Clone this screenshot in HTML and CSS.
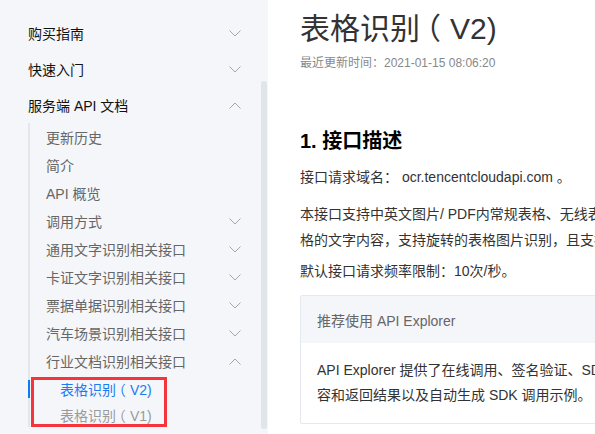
FILE: index.html
```html
<!DOCTYPE html>
<html lang="zh-CN">
<head>
<meta charset="utf-8">
<link rel="stylesheet" href="styles.css">
</head>
<body>
<div class="page">
  <aside class="sidebar">
    <div class="nav-item">
      <span>购买指南</span>
      <svg class="chev" viewBox="0 0 12 7"><polyline points="0.5,0.5 6,6 11.5,0.5"/></svg>
    </div>
    <div class="nav-item">
      <span>快速入门</span>
      <svg class="chev" viewBox="0 0 12 7"><polyline points="0.5,0.5 6,6 11.5,0.5"/></svg>
    </div>
    <div class="nav-item">
      <span>服务端 API 文档</span>
      <svg class="chev" viewBox="0 0 12 7"><polyline points="0.5,6.5 6,1 11.5,6.5"/></svg>
    </div>
    <div class="sub-list">
      <div class="sub-item"><span>更新历史</span></div>
      <div class="sub-item"><span>简介</span></div>
      <div class="sub-item"><span>API 概览</span></div>
      <div class="sub-item"><span>调用方式</span><svg class="chev" viewBox="0 0 12 7"><polyline points="0.5,0.5 6,6 11.5,0.5"/></svg></div>
      <div class="sub-item"><span>通用文字识别相关接口</span><svg class="chev" viewBox="0 0 12 7"><polyline points="0.5,0.5 6,6 11.5,0.5"/></svg></div>
      <div class="sub-item"><span>卡证文字识别相关接口</span><svg class="chev" viewBox="0 0 12 7"><polyline points="0.5,0.5 6,6 11.5,0.5"/></svg></div>
      <div class="sub-item"><span>票据单据识别相关接口</span><svg class="chev" viewBox="0 0 12 7"><polyline points="0.5,0.5 6,6 11.5,0.5"/></svg></div>
      <div class="sub-item"><span>汽车场景识别相关接口</span><svg class="chev" viewBox="0 0 12 7"><polyline points="0.5,0.5 6,6 11.5,0.5"/></svg></div>
      <div class="sub-item"><span>行业文档识别相关接口</span><svg class="chev" viewBox="0 0 12 7"><polyline points="0.5,6.5 6,1 11.5,6.5"/></svg></div>
      <div class="leaf active"><span>表格识别<span class="paren">（</span>V2)</span></div>
      <div class="leaf muted"><span>表格识别<span class="paren">（</span>V1)</span></div>
    </div>
    <div class="scrollbar"></div>
    <div class="highlight"></div>
  </aside>
  <main class="content">
    <h1 class="title">表格识别<span class="paren">（</span>V2)</h1>
    <div class="updated">最近更新时间：2021-01-15 08:06:20</div>
    <h2 class="section">1. 接口描述</h2>
    <p class="para">接口请求域名： ocr.tencentcloudapi.com 。</p>
    <p class="para p2">本接口支持中英文图片/ PDF内常规表格、无线表格、多表格的检测和识别，支持日文有线表格识别，返回每个单元<br>格的文字内容，支持旋转的表格图片识别，且支持将识别结果保存为 Excel 格式。</p>
    <p class="para p3">默认接口请求频率限制：10次/秒。</p>
    <div class="tip">
      <div class="tip-head">推荐使用 API Explorer</div>
      <div class="tip-body">API Explorer 提供了在线调用、签名验证、SDK 代码生成和快速检索接口等能力。您可查看每次调用的请求内<br>容和返回结果以及自动生成 SDK 调用示例。</div>
    </div>
  </main>
</div>
</body>
</html>
```

FILE: styles.css
```css
html, body {
  margin: 0;
  padding: 0;
}
body {
  font-family: "Liberation Sans", "Noto Sans CJK SC", sans-serif;
  overflow: hidden;
  width: 595px;
  height: 434px;
}
.page {
  display: flex;
  height: 434px;
  overflow: hidden;
}
.sidebar {
  position: relative;
  flex: 0 0 268px;
  width: 268px;
  background: #f4f6fa;
  padding-top: 15px;
  box-sizing: border-box;
  display: flex;
  flex-direction: column;
}
.nav-item {
  height: 36px;
  display: flex;
  align-items: center;
  justify-content: space-between;
  padding: 0 27px 0 28px;
  font-size: 14px;
  color: #111;
}
.chev {
  width: 12px;
  height: 7px;
  fill: none;
  stroke: #a3a6ab;
  stroke-width: 1;
}
.sub-list {
  margin-left: 28px;
  border-left: 2px solid #e3e6eb;
  padding-right: 27px;
  display: flex;
  flex-direction: column;
}
.sub-item {
  height: 28px;
  display: flex;
  align-items: center;
  justify-content: space-between;
  padding-left: 16px;
  font-size: 14px;
  color: #666;
}
.leaf {
  position: relative;
  height: 28px;
  display: flex;
  align-items: center;
  padding-left: 30px;
  font-size: 14px;
}
.paren {
  display: inline-block;
  width: 1em;
  text-indent: -0.3em;
  white-space: nowrap;
}
.leaf.active {
  color: #1a7cf0;
}
.leaf.active::before {
  content: "";
  position: absolute;
  left: -2px;
  top: 5px;
  width: 2px;
  height: 18px;
  background: #0a7df5;
}
.leaf.muted {
  height: 24px;
  color: #9a9a9a;
}
.scrollbar {
  position: absolute;
  left: 261px;
  top: 81px;
  width: 6px;
  height: 348px;
  border-radius: 3px;
  background: #e1e4e9;
}
.highlight {
  position: absolute;
  left: 31px;
  top: 377px;
  width: 136px;
  height: 50px;
  box-sizing: border-box;
  border: 3px solid #f5343c;
}
.content {
  flex: 0 0 760px;
  padding: 9px 0 0 32px;
  box-sizing: border-box;
  color: #333;
}
.title {
  margin: 0;
  font-size: 30px;
  font-weight: normal;
  line-height: 40px;
  color: #333;
  white-space: nowrap;
}
.updated {
  margin-top: 4px;
  font-size: 12px;
  line-height: 20px;
  color: #888;
}
.section {
  margin: 54px 0 0;
  font-size: 20px;
  line-height: 28px;
  font-weight: bold;
  color: #000;
}
.para {
  margin: 9px 0 0;
  font-size: 14px;
  line-height: 26px;
  color: #333;
  white-space: nowrap;
}
.p2 {
  margin-top: 11px;
}
.p3 {
  margin-top: 5px;
}
.tip {
  margin-top: 11px;
  border: 1px solid #e5e8ed;
  border-radius: 2px;
}
.tip-head {
  height: 47px;
  display: flex;
  align-items: center;
  padding-left: 16px;
  background: #f4f6fa;
  font-size: 14px;
  color: #666;
}
.tip-body {
  padding: 15px 16px 15px;
  font-size: 14px;
  line-height: 25px;
  color: #333;
  white-space: nowrap;
}
```
